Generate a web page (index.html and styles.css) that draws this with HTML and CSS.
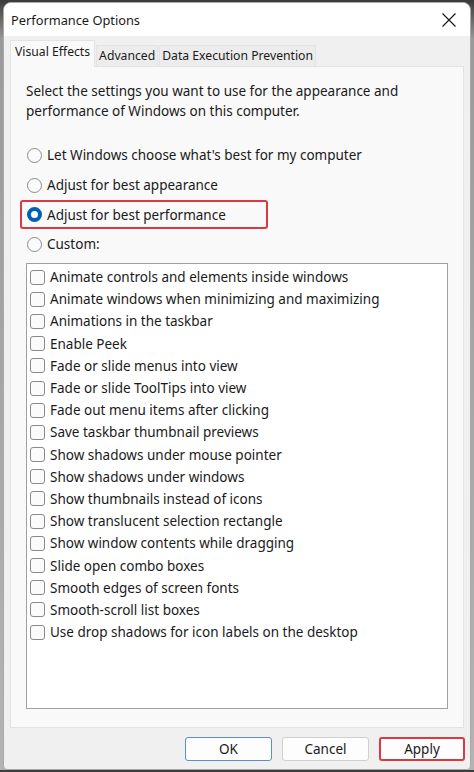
FILE: index.html
```html
<!DOCTYPE html>
<html>
	<head>
		<meta charset="UTF-8">
		<title>Performance Options</title>
		<link rel="stylesheet" href="styles.css">
	</head>
	<body>
		<div class="window">
			<div class="titlebar">
				<span class="title">Performance Options</span>
				<svg class="close" width="16" height="16" viewBox="0 0 16 16">
					<path d="M1.5 1.5 L14.5 14.5 M14.5 1.5 L1.5 14.5" stroke="#1a1a1a" stroke-width="1.2" fill="none" />
				</svg>
			</div>
			<div class="tabs">
				<div class="tab tab-active">Visual Effects</div>
				<div class="tab">Advanced</div>
				<div class="tab">Data Execution Prevention</div>
			</div>
			<div class="panel">
				<p class="intro">Select the settings you want to use for the appearance and performance of Windows on this computer.</p>
				<div class="radios">
					<label class="radio"><span class="dot"></span>Let Windows choose what's best for my computer</label>
					<label class="radio"><span class="dot"></span>Adjust for best appearance</label>
					<label class="radio radio-mark"><span class="dot dot-on"></span>Adjust for best performance</label>
					<label class="radio"><span class="dot"></span>Custom:</label>
				</div>
				<div class="list">
					<div class="item"><span class="box"></span>Animate controls and elements inside windows</div>
					<div class="item"><span class="box"></span>Animate windows when minimizing and maximizing</div>
					<div class="item"><span class="box"></span>Animations in the taskbar</div>
					<div class="item"><span class="box"></span>Enable Peek</div>
					<div class="item"><span class="box"></span>Fade or slide menus into view</div>
					<div class="item"><span class="box"></span>Fade or slide ToolTips into view</div>
					<div class="item"><span class="box"></span>Fade out menu items after clicking</div>
					<div class="item"><span class="box"></span>Save taskbar thumbnail previews</div>
					<div class="item"><span class="box"></span>Show shadows under mouse pointer</div>
					<div class="item"><span class="box"></span>Show shadows under windows</div>
					<div class="item"><span class="box"></span>Show thumbnails instead of icons</div>
					<div class="item"><span class="box"></span>Show translucent selection rectangle</div>
					<div class="item"><span class="box"></span>Show window contents while dragging</div>
					<div class="item"><span class="box"></span>Slide open combo boxes</div>
					<div class="item"><span class="box"></span>Smooth edges of screen fonts</div>
					<div class="item"><span class="box"></span>Smooth-scroll list boxes</div>
					<div class="item"><span class="box"></span>Use drop shadows for icon labels on the desktop</div>
				</div>
			</div>
			<div class="footer">
				<div class="btn btn-default">OK</div>
				<div class="btn">Cancel</div>
				<div class="btn btn-mark">Apply</div>
			</div>
		</div>
	</body>
</html>
```

FILE: styles.css
```css
body{
	margin: 0;
	background: linear-gradient(#3a3a3a, #9a9a9a 40px, #b4b4b4);
	font-family: "Noto Sans", "Open Sans", sans-serif;
	font-size: 13.5px;
	color: #1a1a1a;
}
.window{
	width: 466px;
	height: 766px;
	margin: 2px 3px 0 3px;
	background-color: #f0f0f0;
	border: 1px solid #a8a8a8;
	border-radius: 8px 8px 4px 4px;
	overflow: hidden;
}
.titlebar{
	height: 33px;
	background-color: #fff;
	display: flex;
	align-items: center;
	justify-content: space-between;
	padding: 0 13px 0 7px;
}
.title{
	font-size: 12.8px;
}
.tabs{
	display: flex;
	align-items: flex-end;
	height: 30px;
	padding: 0 6px;
	font-size: 12.2px;
}
.tab{
	height: 20px;
	line-height: 20px;
	padding: 0 2px;
	border: 1px solid #e3e3e3;
	border-bottom: none;
	background-color: #ececec;
	white-space: nowrap;
}
.tab + .tab{
	margin-left: 1px;
}
.tab-active{
	height: 26px;
	line-height: 22px;
	padding: 0 4px;
	background-color: #f9f9f9;
	margin-bottom: -1px;
	position: relative;
}
.panel{
	height: 646px;
	margin: 0 6px;
	padding: 14px 14px 0 15px;
	background-color: #f9f9f9;
	border: 1px solid #e3e3e3;
}
.intro{
	margin: 0;
	line-height: 20px;
	width: 380px;
}
.radios{
	display: flex;
	flex-direction: column;
	align-items: flex-start;
	margin-top: 19px;
}
.radio{
	display: flex;
	align-items: center;
	gap: 5px;
	height: 30px;
	margin-left: 1px;
	white-space: nowrap;
}
.radio-mark{
	height: 25px;
	width: 239px;
	margin-left: -6px;
	padding-left: 5px;
	border: 2px solid #d83a42;
	border-radius: 3px;
}
.dot{
	width: 13px;
	height: 13px;
	border: 1px solid #8a8a8a;
	border-radius: 50%;
	background-color: #fbfbfb;
}
.dot-on{
	width: 7px;
	height: 7px;
	border: 4px solid #005fb8;
	background-color: #fff;
}
.list{
	margin-top: 4px;
	width: 420px;
	height: 442px;
	padding-top: 2px;
	background-color: #fff;
	border: 1px solid #a0a0a0;
}
.item{
	display: flex;
	align-items: center;
	gap: 5px;
	height: 22.2px;
	padding-left: 3px;
	white-space: nowrap;
}
.box{
	width: 13px;
	height: 13px;
	border: 1px solid #8a8a8a;
	border-radius: 3px;
	background-color: #fbfbfb;
}
.footer{
	display: flex;
	justify-content: flex-end;
	gap: 10px;
	padding: 9px 5px 0 0;
}
.btn{
	width: 85px;
	height: 22px;
	line-height: 22px;
	text-align: center;
	background-color: #fdfdfd;
	border: 1px solid #d0d0d0;
	border-radius: 3px;
}
.btn-default{
	border-color: #5c8fc6;
}
.btn-mark{
	border: 2px solid #d83a42;
	width: 82px;
	height: 20px;
	line-height: 20px;
}
```
